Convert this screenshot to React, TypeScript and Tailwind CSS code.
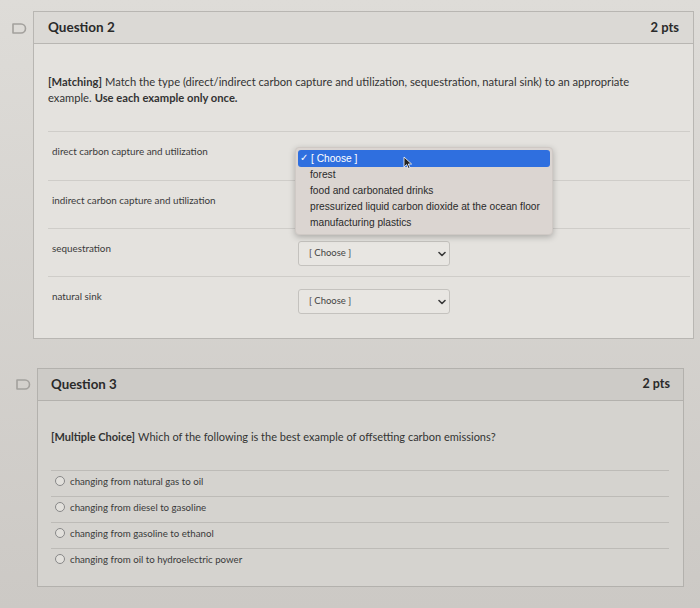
import React from "react";

const FlagIcon = () => (
  <svg width="15" height="11" viewBox="0 0 15 11" fill="none">
    <path
      d="M1 1 H9 A4.5 4.5 0 0 1 9 10 H1 Z"
      stroke="#a3a19d"
      strokeWidth="1.6"
      strokeLinejoin="round"
    />
  </svg>
);

const Chevron = () => (
  <svg width="8" height="6" viewBox="0 0 8 6" fill="none">
    <path d="M1 1.5 L4 4.5 L7 1.5" stroke="#3a3a3a" strokeWidth="1.6" strokeLinecap="round" strokeLinejoin="round" />
  </svg>
);

const Cursor = () => (
  <svg width="10" height="14" viewBox="0 0 10 14" className="absolute left-[105px] top-[6px]">
    <path d="M1 1 L1 11 L3.6 8.6 L5.4 12.6 L7 11.9 L5.3 8 L8.6 8 Z" fill="#222" stroke="#fff" strokeWidth="0.8" />
  </svg>
);

const ChooseSelect = ({ hidden = false }: { hidden?: boolean }) => (
  <div
    className={`w-[152px] h-[25px] rounded-[3px] border border-[#c4c2be] bg-[#e8e6e2] flex items-center justify-between pl-[10px] pr-[3px] text-[9.5px] text-[#444] ${
      hidden ? "invisible" : ""
    }`}
  >
    {!hidden && <span>[ Choose ]</span>}
    <Chevron />
  </div>
);

const OPTIONS = [
  "forest",
  "food and carbonated drinks",
  "pressurized liquid carbon dioxide at the ocean floor",
  "manufacturing plastics",
];

const Dropdown = () => (
  <div className="absolute left-[-3px] top-[1px] w-[258px] h-[88px] rounded-[4px] bg-[#dbd5d1] shadow-[0_2px_6px_rgba(0,0,0,0.25)] border border-[#cfc9c5] pt-[2px] px-[2px] z-10 font-['Liberation_Sans',sans-serif] text-[10.2px] text-[#2a2a2a]">
    <div className="relative h-[17px] rounded-[3px] bg-[#2f6fdf] text-white flex items-center pl-[2px]">
      <span className="w-[11px] text-[9.5px]">✓</span>
      <span>[ Choose ]</span>
      <Cursor />
    </div>
    {OPTIONS.map((o) => (
      <div key={o} className="h-[16px] flex items-center pl-[12px]">
        {o}
      </div>
    ))}
  </div>
);

const ROWS = [
  "direct carbon capture and utilization",
  "indirect carbon capture and utilization",
  "sequestration",
  "natural sink",
];

const ANSWERS = [
  "changing from natural gas to oil",
  "changing from diesel to gasoline",
  "changing from gasoline to ethanol",
  "changing from oil to hydroelectric power",
];

const App = () => {
  return (
    <div className="w-[700px] h-[608px] overflow-hidden bg-gradient-to-b from-[#dedcd8] to-[#ccc9c5] font-['Lato',sans-serif] text-[#2f2f2f]">
      {/* Question 2 */}
      <div className="flex pt-[11px]">
        <div className="w-[33px] pt-[12px] pl-[12px]">
          <FlagIcon />
        </div>
        <div className="w-[661px] h-[328px] border border-[#b8b6b2] bg-[#e4e2de]">
          <div className="h-[32px] bg-[#dbd9d5] border-b border-[#b8b6b2] flex items-center justify-between pl-[14px] pr-[14px]">
            <span className="text-[13.5px] font-bold text-[#2a2a2a]">Question 2</span>
            <span className="text-[13px] font-bold text-[#2a2a2a]">2 pts</span>
          </div>
          <div className="pl-[14px] pt-[30px]">
            <div className="text-[11.2px] leading-[16px] text-[#333]">
              <div className="flex gap-[3px] whitespace-nowrap">
                <span className="font-bold">[Matching]</span>
                <span>
                  Match the type (direct/indirect carbon capture and utilization, sequestration, natural sink) to an
                  appropriate
                </span>
              </div>
              <div className="flex gap-[3px] whitespace-nowrap">
                <span>example.</span>
                <span className="font-bold">Use each example only once.</span>
              </div>
            </div>
            <div className="mt-[25px] mr-[3px]">
              {ROWS.map((r, i) => (
                <div
                  key={r}
                  className={`${i === 0 ? "h-[49px]" : "h-[48px]"} border-t border-[#cfcdc9] flex items-start`}
                >
                  <div className="w-[250px] pl-[4px] pt-[12px] text-[9.85px] text-[#3a3a3a]">{r}</div>
                  <div className="relative pt-[12px]">
                    {i === 0 ? (
                      <div className="relative">
                        <ChooseSelect hidden />
                        <div className="absolute left-0 top-[2px]">
                          <Dropdown />
                        </div>
                      </div>
                    ) : (
                      <ChooseSelect hidden={i === 1} />
                    )}
                  </div>
                </div>
              ))}
            </div>
          </div>
        </div>
      </div>

      {/* Question 3 */}
      <div className="flex pt-[29px]">
        <div className="w-[37px] pt-[11px] pl-[16px]">
          <FlagIcon />
        </div>
        <div className="w-[647px] h-[219px] border border-[#b3b1ad] bg-[#d5d3cf]">
          <div className="h-[32px] bg-[#cdcbc7] border-b border-[#b3b1ad] flex items-center justify-between pl-[13px] pr-[13px]">
            <span className="text-[13.3px] font-bold text-[#2a2a2a]">Question 3</span>
            <span className="text-[12.5px] font-bold text-[#2a2a2a]">2 pts</span>
          </div>
          <div className="pl-[13px] pr-[14px] pt-[28px]">
            <div className="flex gap-[3px] whitespace-nowrap text-[11px] leading-[16px] text-[#333]">
              <span className="font-bold">[Multiple Choice]</span>
              <span>Which of the following is the best example of offsetting carbon emissions?</span>
            </div>
            <div className="mt-[25px]">
              {ANSWERS.map((a) => (
                <div key={a} className="h-[26px] border-t border-[#bdbbb7] flex items-center pl-[4px] pb-[5px]">
                  <span className="w-[10px] h-[10px] rounded-full border border-[#888] bg-[#e2e0dc] mr-[5px]" />
                  <span className="text-[9.7px] text-[#3a3a3a]">{a}</span>
                </div>
              ))}
            </div>
          </div>
        </div>
      </div>
    </div>
  );
};

export default App;
